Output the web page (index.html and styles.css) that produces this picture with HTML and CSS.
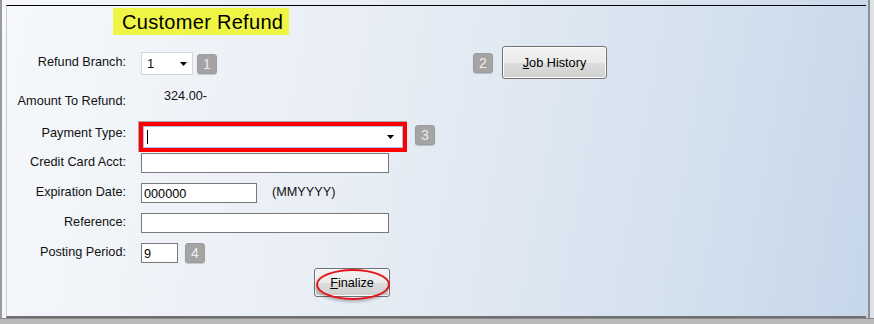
FILE: index.html
```html
<!DOCTYPE html>
<html lang="en">

<head>
    <meta charset="UTF-8">
    <title>Customer Refund</title>
    <link rel="stylesheet" href="styles.css">
</head>

<body>
    <div class="screen">
        <div class="window">
            <div class="panel">
                <h1 class="title">Customer Refund</h1>

                <div class="row r-branch">
                    <label class="lbl">Refund Branch:</label>
                    <div class="combo small">
                        <span>1</span>
                        <svg class="arrow" width="7" height="4" viewBox="0 0 7 4"><polygon points="0,0 7,0 3.5,4" fill="#000"/></svg>
                    </div>
                    <span class="badge b1">1</span>
                    <span class="badge b2">2</span>
                    <button class="btn job"><u>J</u>ob History</button>
                </div>

                <div class="row r-amount">
                    <label class="lbl">Amount To Refund:</label>
                    <span class="amount">324.00-</span>
                </div>

                <div class="row r-payment">
                    <label class="lbl">Payment Type:</label>
                    <div class="focus">
                        <div class="combo wide">
                            <span class="caret"></span>
                            <svg class="arrow" width="7" height="4" viewBox="0 0 7 4"><polygon points="0,0 7,0 3.5,4" fill="#000"/></svg>
                        </div>
                    </div>
                    <span class="badge b3">3</span>
                </div>

                <div class="row r-field r-card">
                    <label class="lbl">Credit Card Acct:</label>
                    <input class="field long" type="text" value="">
                </div>

                <div class="row r-field">
                    <label class="lbl">Expiration Date:</label>
                    <input class="field mid" type="text" value="000000">
                    <span class="hint">(MMYYYY)</span>
                </div>

                <div class="row r-field">
                    <label class="lbl">Reference:</label>
                    <input class="field long" type="text" value="">
                </div>

                <div class="row r-field">
                    <label class="lbl">Posting Period:</label>
                    <input class="field tiny" type="text" value="9">
                    <span class="badge b4">4</span>
                </div>

                <div class="row r-final">
                    <div class="final-wrap">
                        <button class="btn final"><u>F</u>inalize</button>
                        <span class="ring"></span>
                    </div>
                </div>
            </div>
        </div>
        <div class="rail"></div>
        <div class="outside"></div>
    </div>
    <div class="bottom"></div>
</body>

</html>
```

FILE: styles.css
```css
body {
    margin: 0;
    padding: 0;
    font-family: "Liberation Sans", Arial, sans-serif;
    font-size: 12.7px;
    color: #111;
    background-color: #c2c2c2;
    width: 874px;
    height: 324px;
    overflow: hidden;
}

.screen {
    display: flex;
    height: 318px;
}

.window {
    width: 868px;
    flex: none;
    box-sizing: border-box;
    border-left: 2px solid #9a9a9a;
    padding: 5px 0 0 4px;
    background: linear-gradient(100deg, #f6f8fb 0%, #e9eef5 40%, #d6e2ef 75%, #c6d7ea 100%);
}

.rail {
    width: 2px;
    background-color: #8e8e8e;
}

.outside {
    flex: 1;
    background-color: #dde2e8;
}

.bottom {
    height: 6px;
    border-top: 1px solid #8a8a8a;
    background-color: #b9b9b9;
}

.panel {
    width: 859px;
    height: 310px;
    border-top: 1px solid #000;
    border-left: 1px solid #c9ced6;
    border-bottom: 2px solid #6f6f6f;
}

.title {
    display: inline-block;
    margin: 2px 0 0 106px;
    width: 167px;
    height: 27px;
    padding-left: 9px;
    line-height: 28px;
    font-size: 20px;
    font-weight: normal;
    letter-spacing: 0.3px;
    color: #000;
    background-color: #eef545;
}

.row {
    display: flex;
    align-items: center;
}

.lbl {
    width: 119px;
    flex: none;
    text-align: right;
    margin-right: 15px;
    color: #111;
}

.r-branch {
    height: 33px;
    margin-top: 11px;
}

.r-branch .lbl {
    margin-bottom: 2px;
}

.combo {
    display: flex;
    align-items: center;
    justify-content: space-between;
    box-sizing: border-box;
    background-color: #fff;
}

.combo.small {
    width: 52px;
    height: 23px;
    margin-top: 2px;
    padding: 0 5px 0 5px;
    border: 1px solid #d2d6dc;
    font-size: 13px;
}

.combo .arrow {
    flex: none;
    margin-top: 1px;
}

.badge {
    display: flex;
    align-items: center;
    justify-content: center;
    width: 20px;
    height: 20px;
    box-sizing: border-box;
    border-radius: 3px;
    background-color: #a4a4a4;
    border: 1px solid #9b9b9b;
    box-shadow: 0 1px 1px rgba(0, 0, 0, 0.18);
    color: #ececec;
    font-size: 14px;
}

.b1 {
    margin-left: 4px;
    margin-top: 3px;
}

.b2 {
    margin-left: 256px;
}

.b3 {
    margin-left: 8px;
    margin-bottom: 3px;
}

.b4 {
    margin-left: 7px;
}

.btn {
    font-family: "Liberation Sans", Arial, sans-serif;
    font-size: 12.7px;
    color: #000;
    border: 1px solid #707070;
    border-radius: 3px;
    box-shadow: inset 0 0 0 1px #fcfcfc;
    background: linear-gradient(#f2f2f2 0%, #ebebeb 50%, #dddddd 51%, #cfcfcf 100%);
    padding: 0;
    cursor: pointer;
}

.btn.job {
    width: 105px;
    height: 33px;
    margin-left: 9px;
}

.r-amount {
    height: 24px;
    margin-top: 10px;
}

.amount {
    margin-left: 23px;
    margin-bottom: 10px;
}

.r-payment {
    height: 32px;
    margin-top: 7px;
}

.r-payment .lbl {
    margin-right: 12px;
    margin-bottom: 6px;
}

.focus {
    border-top: 1px solid #a8a8a8;
    border-left: 1px solid #a8a8a8;
    height: 31px;
    box-sizing: border-box;
}

.combo.wide {
    width: 268px;
    height: 30px;
    border: 4px solid #ff0000;
    box-shadow: inset 0 0 0 1px #9cc3e8;
    padding: 0 9px 0 4px;
}

.caret {
    width: 1px;
    height: 14px;
    background-color: #000;
}

.r-field {
    height: 20px;
    margin-top: 10px;
}

.r-field .lbl {
    margin-bottom: 2px;
}

.r-card {
    margin-top: 1px;
}

.field {
    box-sizing: border-box;
    height: 20px;
    margin: 0;
    padding: 1px 2px 0 2px;
    border: 1px solid #7a7a7a;
    background-color: #fff;
    font-family: "Liberation Sans", Arial, sans-serif;
    font-size: 12.7px;
    color: #000;
    outline: none;
}

.field.long {
    width: 248px;
}

.field.mid {
    width: 116px;
}

.field.tiny {
    width: 37px;
}

.hint {
    margin-left: 15px;
    margin-bottom: 2px;
}

.r-final {
    margin-top: 5px;
    padding-left: 307px;
}

.final-wrap {
    position: relative;
}

.btn.final {
    display: block;
    width: 76px;
    height: 29px;
}

.ring {
    position: absolute;
    left: 2px;
    top: 1px;
    width: 74px;
    height: 31px;
    box-sizing: border-box;
    border: 2.5px solid #e4161b;
    border-radius: 50%;
    box-shadow: -1px 2px 3px rgba(0, 0, 0, 0.25);
    pointer-events: none;
}
```
